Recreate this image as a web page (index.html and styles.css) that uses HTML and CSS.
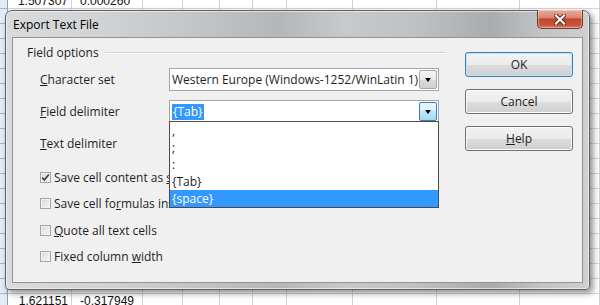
FILE: index.html
```html
<!DOCTYPE html>
<html lang="en">
<head>
    <meta charset="UTF-8">
    <title>Export Text File</title>
    <link rel="stylesheet" href="styles.css">
</head>
<body>

    <!-- spreadsheet behind the dialog -->
    <div class="sheet">
        <div class="rowhead"></div>
        <div class="col col-a">
            <div class="cell">1.507307</div>
            <div class="cell">1.567099</div>
            <div class="cell last">1.621151</div>
        </div>
        <div class="col col-b">
            <div class="cell">0.000260</div>
            <div class="cell">0.101999</div>
            <div class="cell last">-0.317949</div>
        </div>
        <div class="col col-c"></div>
        <div class="col col-d"></div>
        <div class="col col-e"></div>
        <div class="col col-f"></div>
        <div class="col col-g"></div>
        <div class="col col-h"></div>
        <div class="col col-i"></div>
        <div class="col col-j"></div>
    </div>

    <div class="dialog">
        <div class="titlebar">
            <span class="title">Export Text File</span>
            <button class="close" type="button">
                <svg width="12" height="11" viewBox="0 0 12 11">
                    <path d="M2 1.5 L10 9.5 M10 1.5 L2 9.5" stroke="#5a2018" stroke-width="4" stroke-linecap="square"/>
                    <path d="M2 1.5 L10 9.5 M10 1.5 L2 9.5" stroke="#ffffff" stroke-width="2.2" stroke-linecap="square"/>
                </svg>
            </button>
        </div>

        <div class="client">
            <div class="options">
                <div class="legend"><span>Field options</span><span class="rule"></span></div>

                <div class="form">
                    <div class="field">
                        <label><u>C</u>haracter set</label>
                        <div class="combo">
                            <span class="value">Western Europe (Windows-1252/WinLatin 1)</span>
                            <span class="drop"><i></i></span>
                        </div>
                    </div>
                    <div class="field">
                        <label><u>F</u>ield delimiter</label>
                        <div class="combo">
                            <span class="value"><span class="sel">{Tab}</span></span>
                            <span class="drop hot"><i></i></span>
                            <ul class="list">
                                <li>,</li>
                                <li>;</li>
                                <li>:</li>
                                <li>{Tab}</li>
                                <li class="current">{space}</li>
                            </ul>
                        </div>
                    </div>
                    <div class="field">
                        <label><u>T</u>ext delimiter</label>
                        <div class="combo">
                            <span class="value">"</span>
                            <span class="drop"><i></i></span>
                        </div>
                    </div>

                    <div class="checks">
                        <div class="check">
                            <span class="box">
                                <svg width="9" height="9" viewBox="0 0 9 9"><path d="M1.2 4.6 L3.4 7 L7.8 1.6" fill="none" stroke="#3a3a3a" stroke-width="1.6"/></svg>
                            </span>
                            <span>Save cell content as <u>s</u>hown</span>
                        </div>
                        <div class="check"><span class="box"></span><span>Save cell fo<u>r</u>mulas instead of calculated values</span></div>
                        <div class="check"><span class="box"></span><span><u>Q</u>uote all text cells</span></div>
                        <div class="check"><span class="box"></span><span>Fixed column <u>w</u>idth</span></div>
                    </div>
                </div>
            </div>

            <div class="buttons">
                <button class="btn default" type="button">OK</button>
                <button class="btn" type="button">Cancel</button>
                <button class="btn" type="button"><u>H</u>elp</button>
            </div>
        </div>
    </div>

</body>
</html>
```

FILE: styles.css
```css
* {
    box-sizing: border-box;
}

html, body {
    margin: 0;
    height: 100%;
    overflow: hidden;
}

body {
    position: relative;
    background: #ffffff;
    font-family: "Open Sans", "Noto Sans", sans-serif;
    font-size: 12px;
    color: #1e1e1e;
}

/* spreadsheet */

.sheet {
    display: flex;
    height: 315px;
    margin-top: -6px;
    font-family: "Liberation Sans", Arial, sans-serif;
    font-size: 12px;
    color: #111111;
    background: repeating-linear-gradient(to bottom, #ffffff 0 14px, #d6d6d6 14px 15px);
}

.rowhead {
    width: 8px;
    background: repeating-linear-gradient(to bottom, #e2ebf6 0 14px, #9fb6d0 14px 15px);
    border-right: 1px solid #8aa4c4;
}

.col {
    display: flex;
    flex-direction: column;
    border-right: 1px solid #d2d2d2;
}

.col-a { width: 64px; }
.col-b { width: 71px; }
.col-c { width: 40px; }
.col-d { width: 37px; }
.col-e { width: 33px; }
.col-f { width: 34px; }
.col-g { width: 66px; }
.col-h { width: 84px; }
.col-i { width: 83px; }
.col-j { flex: 1; }

.cell {
    height: 15px;
    line-height: 15px;
    padding: 0 3px;
    text-align: right;
    white-space: nowrap;
}

.col-b .cell {
    text-align: left;
    padding-left: 8px;
}

.cell.last {
    margin-top: auto;
}

/* dialog window */

.dialog {
    position: absolute;
    left: 5px;
    top: 10px;
    width: 585px;
    height: 280px;
    display: flex;
    flex-direction: column;
    padding: 0 6px 6px;
    border: 1px solid #5f6267;
    border-radius: 7px 7px 4px 4px;
    background: linear-gradient(to right, #d9dadc 0%, #d3d4d6 14%, #c3c5c7 32%, #b4b6b8 47%, #c8c9ca 58%, #c0c1c2 70%, #a9abad 83%, #c2c3c4 92%, #cfd0d1 100%);
    box-shadow: 3px 3px 6px rgba(0,0,0,.45), inset 0 0 0 1px rgba(255,255,255,.55);
}

.titlebar {
    height: 26px;
    display: flex;
    align-items: flex-start;
}

.title {
    margin: 6px 0 0 1px;
    line-height: 16px;
    color: #000000;
}

.close {
    margin: -1px 0 0 auto;
    width: 46px;
    height: 19px;
    padding: 0;
    display: flex;
    align-items: center;
    justify-content: center;
    border: 1px solid #6a3a33;
    border-top: 0;
    border-radius: 0 0 5px 5px;
    background: linear-gradient(to bottom, #e8a898 0%, #d98a78 40%, #c3442c 52%, #c8573c 85%, #d9826b 100%);
    box-shadow: inset 0 0 0 1px rgba(255,255,255,.35);
}

.client {
    flex: 1;
    display: flex;
    background: #f0f0f0;
    border: 1px solid #8f9297;
}

.options {
    width: 418px;
    margin-left: 14px;
    padding-top: 8px;
}

.legend {
    display: flex;
    align-items: center;
    gap: 6px;
    height: 14px;
    line-height: 14px;
}

.legend .rule {
    flex: 1;
    border-top: 1px solid #d3d3d3;
    border-bottom: 1px solid #ffffff;
}

.form {
    margin-top: 8px;
    padding-left: 13px;
}

.field {
    display: flex;
    align-items: center;
    height: 23px;
    margin-bottom: 9px;
}

.field label {
    width: 129px;
}

.combo {
    position: relative;
    width: 270px;
    height: 23px;
    display: flex;
    align-items: center;
    background: #ffffff;
    border: 1px solid #a3a5aa;
}

.combo .value {
    padding-left: 2px;
    white-space: nowrap;
}

.sel {
    display: inline-block;
    padding: 0 1px;
    line-height: 16px;
    background: #3399ff;
    color: #ffffff;
}

.drop {
    margin: 0 1px 0 auto;
    width: 18px;
    height: 19px;
    display: flex;
    align-items: center;
    justify-content: center;
    border: 1px solid #a8a8a8;
    border-radius: 2px;
    background: linear-gradient(to bottom, #f4f4f4 0%, #e9e9e9 50%, #dadada 51%, #d0d0d0 100%);
}

.drop.hot {
    border-color: #3c7fb1;
    background: linear-gradient(to bottom, #eaf6fd 0%, #d9f0fc 45%, #bee6fd 50%, #a7d9f5 100%);
}

.drop i {
    width: 0;
    height: 0;
    border-left: 3.5px solid transparent;
    border-right: 3.5px solid transparent;
    border-top: 4px solid #000000;
}

.list {
    position: absolute;
    z-index: 2;
    top: calc(100% - 1px);
    left: -1px;
    width: 270px;
    margin: 0;
    padding: 0;
    list-style: none;
    background: #ffffff;
    border: 1px solid #4a4a4a;
}

.list li {
    height: 17px;
    line-height: 17px;
    padding-left: 2px;
}

.list li.current {
    background: #3399ff;
    color: #ffffff;
}

.checks {
    padding-top: 4px;
}

.check {
    display: flex;
    align-items: center;
    height: 18px;
    margin-bottom: 8.5px;
    white-space: nowrap;
}

.box {
    width: 11px;
    height: 11px;
    margin-right: 3px;
    display: flex;
    align-items: center;
    justify-content: center;
    border: 1px solid #a4a4a4;
    background: linear-gradient(135deg, #d9d9d9, #f6f6f6);
    box-shadow: inset 0 0 0 1px #f2f2f2;
}

.buttons {
    width: 108px;
    margin-left: 20px;
    padding-top: 14px;
    display: flex;
    flex-direction: column;
    gap: 12px;
}

.btn {
    height: 25px;
    padding: 0;
    font-family: inherit;
    font-size: 12px;
    color: #1e1e1e;
    border: 1px solid #707070;
    border-radius: 3px;
    background: linear-gradient(to bottom, #f2f2f2 0%, #ebebeb 50%, #dddddd 51%, #cfcfcf 100%);
    box-shadow: inset 0 0 0 1px #fbfbfb;
}

.btn.default {
    border-color: #3c7fb1;
    box-shadow: inset 0 0 0 1px #bde5fb;
}
```
